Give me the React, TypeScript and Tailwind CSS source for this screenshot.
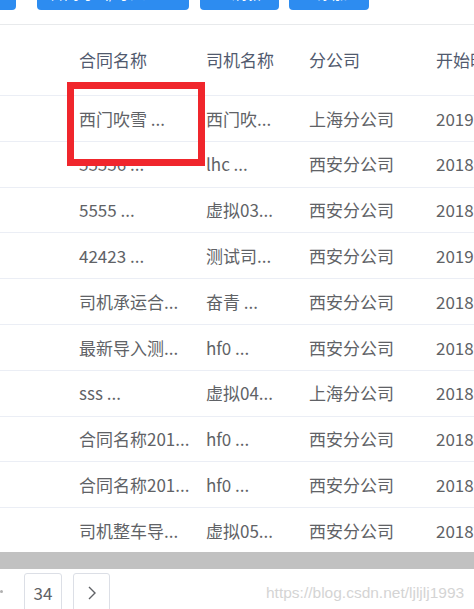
import React from 'react';

const rows = [
    ['西门吹雪 ...', '西门吹...', '上海分公司', '2019'],
    ['55556 ...', 'lhc ...', '西安分公司', '2018'],
    ['5555 ...', '虚拟03...', '西安分公司', '2018'],
    ['42423 ...', '测试司...', '西安分公司', '2019'],
    ['司机承运合...', '奋青 ...', '西安分公司', '2018'],
    ['最新导入测...', 'hf0 ...', '西安分公司', '2018'],
    ['sss ...', '虚拟04...', '上海分公司', '2018'],
    ['合同名称201...', 'hf0 ...', '西安分公司', '2018'],
    ['合同名称201...', 'hf0 ...', '西安分公司', '2018'],
    ['司机整车导...', '虚拟05...', '西安分公司', '2018'],
];

function Cells({ cells, head }: { cells: string[]; head?: boolean }) {
    return (
        <div className={`flex items-center ${head ? 'text-[#515a6e]' : 'text-[#606266]'}`}>
            <div className="w-[67px] shrink-0" />
            <div className="w-[127px] shrink-0 pl-3 whitespace-nowrap">{cells[0]}</div>
            <div className="w-[103px] shrink-0 pl-3 whitespace-nowrap">{cells[1]}</div>
            <div className="w-[127px] shrink-0 pl-3 whitespace-nowrap">{cells[2]}</div>
            <div className="w-[140px] shrink-0 pl-3 whitespace-nowrap">{cells[3]}</div>
        </div>
    );
}

export default function App() {
    return (
        <div
            className="relative w-[474px] h-[609px] overflow-hidden bg-white text-[17px]"
            style={{ fontFamily: '"Noto Sans CJK SC", "Noto Sans", sans-serif' }}
        >
            {/* Toolbar (mostly scrolled off) */}
            <div className="flex h-[10px] items-end text-white text-[15px]">
                <div className="w-[16px] h-[34px] shrink-0 bg-[#2d8cf0] rounded-br-[4px]" />
                <div className="ml-[21px] w-[152px] h-[34px] shrink-0 bg-[#2d8cf0] rounded-[4px] flex items-center pl-[12px]">合同导出/导入 ⌄</div>
                <div className="ml-[11px] w-[79px] h-[34px] shrink-0 bg-[#2d8cf0] rounded-[4px] flex items-center pl-[10px] gap-[8px]">
                    <span className="w-[14px] h-[14px] rounded-full border-2 border-white" />刷新
                </div>
                <div className="ml-[10px] w-[80px] h-[34px] shrink-0 bg-[#2d8cf0] rounded-[4px] flex items-center pl-[10px] gap-[10px]">
                    <span>+</span>添加
                </div>
            </div>
            <div className="h-[15px] border-b border-[#e8eaec]" />

            {/* Table */}
            <div className="overflow-hidden">
                <div className="h-[71px] flex items-center border-b border-[#ebeef5]">
                    <Cells cells={['合同名称', '司机名称', '分公司', '开始时间']} head />
                </div>
                {rows.map((r, i) => (
                    <div key={i} className="h-[45.8px] flex items-center border-b border-[#ebeef5]">
                        <Cells cells={r} />
                    </div>
                ))}
            </div>

            {/* Horizontal scrollbar */}
            <div className="h-[17px] bg-[#c1c1c1] mt-[-2px]" />

            {/* Pagination */}
            <div className="flex items-start pt-[4px] text-[#606266]">
                <span className="w-[3px] h-[3px] mt-[17px] rounded-full bg-[#b0b0b0]" />
                <div className="ml-[21px] w-[38px] h-[40px] border border-[#dcdfe6] rounded-[3px] flex justify-center pt-[6px]">34</div>
                <div className="ml-[11px] w-[37px] h-[40px] border border-[#dcdfe6] rounded-[3px] flex justify-center pt-[6px]">
                    <svg width="10" height="16" viewBox="0 0 10 16" className="mt-[5px]" fill="none" stroke="#606266" strokeWidth="1.4">
                        <path d="M2 2l6 6-6 6" />
                    </svg>
                </div>
            </div>

            {/* Watermark */}
            <div
                className="absolute left-[266px] top-[581px] text-[15.5px] text-[#d4d4d4] whitespace-nowrap"
                style={{ fontFamily: '"Liberation Sans", sans-serif' }}
            >
                https://blog.csdn.net/ljljlj1993
            </div>

            {/* Red highlight box */}
            <div className="absolute left-[67px] top-[82px] w-[138px] h-[84px] border-[7px] border-[#f0262c]" />
        </div>
    );
}
